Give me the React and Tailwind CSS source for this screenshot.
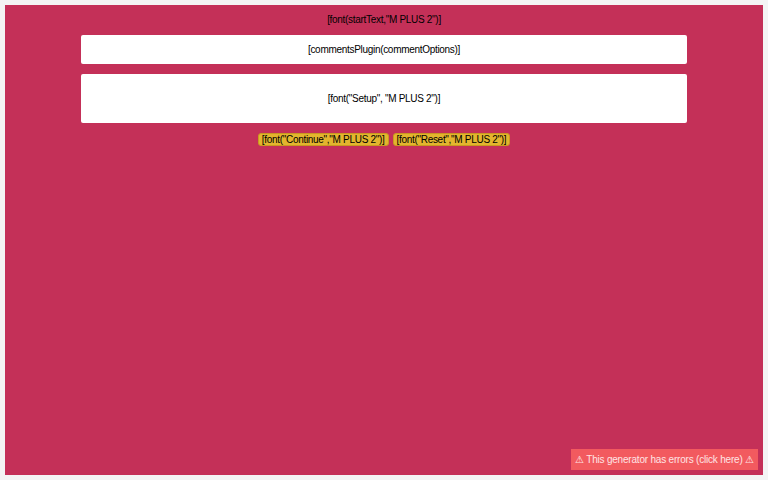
export default function App() {
  const font = { fontFamily: '"Liberation Sans", Arial, sans-serif' };
  return (
    <div className="min-h-[480px] bg-[#f4f4f4] p-[5px]">
      <div
        className="h-[470px] bg-[#c43058] pt-[8px] flex flex-col items-center text-[10px] tracking-[-0.3px] text-black"
        style={font}
      >
        <div className="h-[14px] leading-[14px]">[font(startText,"M PLUS 2")]</div>
        <div className="mt-[8px] w-[606px] h-[29px] bg-white rounded-[2px] flex items-center justify-center">
          [commentsPlugin(commentOptions)]
        </div>
        <div className="mt-[10px] w-[606px] h-[49px] bg-white rounded-[2px] flex items-center justify-center">
          [font("Setup", "M PLUS 2")]
        </div>
        <div className="mt-[10px] flex gap-[4px]">
          <button className="h-[13px] px-[3px] leading-[13px] bg-[#e3b52e] rounded-[3px] border border-[#c99a20] flex items-center">
            [font("Continue","M PLUS 2")]
          </button>
          <button className="h-[13px] px-[3px] leading-[13px] bg-[#e3b52e] rounded-[3px] border border-[#c99a20] flex items-center">
            [font("Reset","M PLUS 2")]
          </button>
        </div>
      </div>
      <div
        className="fixed right-[10px] bottom-[10px] w-[187px] h-[21px] bg-[#f25a5f] text-[#ffe4e4] text-[10px] tracking-[-0.2px] whitespace-nowrap flex items-center justify-center cursor-pointer"
        style={font}
      >
        ⚠ This generator has errors (click here) ⚠
      </div>
    </div>
  );
}
